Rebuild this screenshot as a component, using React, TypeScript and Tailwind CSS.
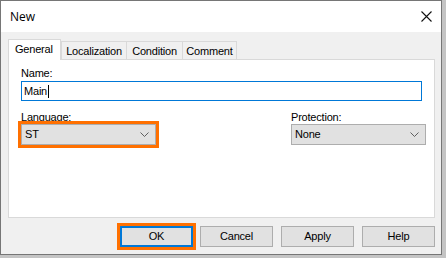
import React from 'react';

const ui = "font-['Liberation_Sans',Arial,sans-serif] text-[11px] tracking-[-0.2px] text-black leading-[13px]";

function Chevron() {
  return (
    <svg width="9" height="5" viewBox="0 0 9 5" className="shrink-0">
      <polyline points="0.5,0.5 4.5,4.5 8.5,0.5" fill="none" stroke="#5f5f5f" strokeWidth="1" />
    </svg>
  );
}

function Combo({ value, highlight }: { value: string; highlight?: boolean }) {
  return (
    <div
      className={`flex items-center justify-between w-[135px] h-[21px] bg-[#e1e1e1] border border-[#adadad] pl-[3px] pr-[6px] ${
        highlight ? 'outline-3 outline-[#ff7000]' : ''
      }`}
    >
      <span>{value}</span>
      <Chevron />
    </div>
  );
}

function Btn({ label, focused, className = '' }: { label: string; focused?: boolean; className?: string }) {
  return (
    <div
      className={`flex items-center justify-center w-[73px] h-[21px] bg-[#e1e1e1] ${
        focused ? 'border-2 border-[#0078d7] outline-3 outline-[#ff7000]' : 'border border-[#adadad]'
      } ${className}`}
    >
      {label}
    </div>
  );
}

export default function App() {
  const tabs = [
    { label: 'Localization', w: 'w-[66px]' },
    { label: 'Condition', w: 'w-[57px]' },
    { label: 'Comment', w: 'w-[55px]' },
  ];

  return (
    <div className="w-[446px] h-[258px] bg-[#c4c4c4] overflow-hidden">
      <div className={`w-[442px] h-[255px] border border-[#767676] bg-[#f0f0f0] flex flex-col ${ui}`}>
        {/* title bar */}
        <div className="h-[31px] bg-white flex items-center justify-between pl-[9px] pr-[9px] shrink-0">
          <span className="font-['Open_Sans',sans-serif] text-[12px] tracking-normal leading-none">New</span>
          <svg width="11" height="11" viewBox="0 0 11 11">
            <path d="M0.5 0.5 L10.5 10.5 M10.5 0.5 L0.5 10.5" stroke="#111" strokeWidth="1.1" />
          </svg>
        </div>

        {/* body */}
        <div className="flex flex-col pt-[7px] pl-[7px] pr-[6px] flex-1">
          {/* tabs */}
          <div className="flex items-end h-[20px]">
            <div className="relative z-10 -mb-px h-[21px] w-[53px] bg-white border border-b-0 border-[#d9d9d9] flex items-start pl-[6px] pt-[3px]">
              General
            </div>
            <div className="flex items-end">
              {tabs.map((t) => (
                <div
                  key={t.label}
                  className={`${t.w} h-[18px] -ml-px first:ml-0 border border-b-0 border-[#d9d9d9] bg-[#f0f0f0] flex items-center justify-center pt-px`}
                >
                  {t.label}
                </div>
              ))}
            </div>
          </div>

          {/* panel */}
          <div className="h-[159px] w-[427px] bg-white border border-[#d9d9d9] pt-[7px] pl-[12px] flex flex-col">
            <div>Name:</div>
            <div className="mt-px w-[401px] h-[20px] border border-[#0078d7] flex items-center pl-[2px]">
              <span>Main</span>
              <span className="w-px h-[13px] bg-black ml-px" />
            </div>
            <div className="flex mt-[10px]">
              <div className="flex flex-col">
                <div>Language:</div>
                <Combo value="ST" highlight />
              </div>
              <div className="flex flex-col ml-[135px]">
                <div>Protection:</div>
                <Combo value="None" />
              </div>
            </div>
          </div>

          {/* buttons */}
          <div className="flex mt-[8px] pl-[112px]">
            <Btn label="OK" focused />
            <Btn label="Cancel" className="ml-[7px]" />
            <Btn label="Apply" className="ml-[8px]" />
            <Btn label="Help" className="ml-[8px]" />
          </div>
        </div>
      </div>
    </div>
  );
}
